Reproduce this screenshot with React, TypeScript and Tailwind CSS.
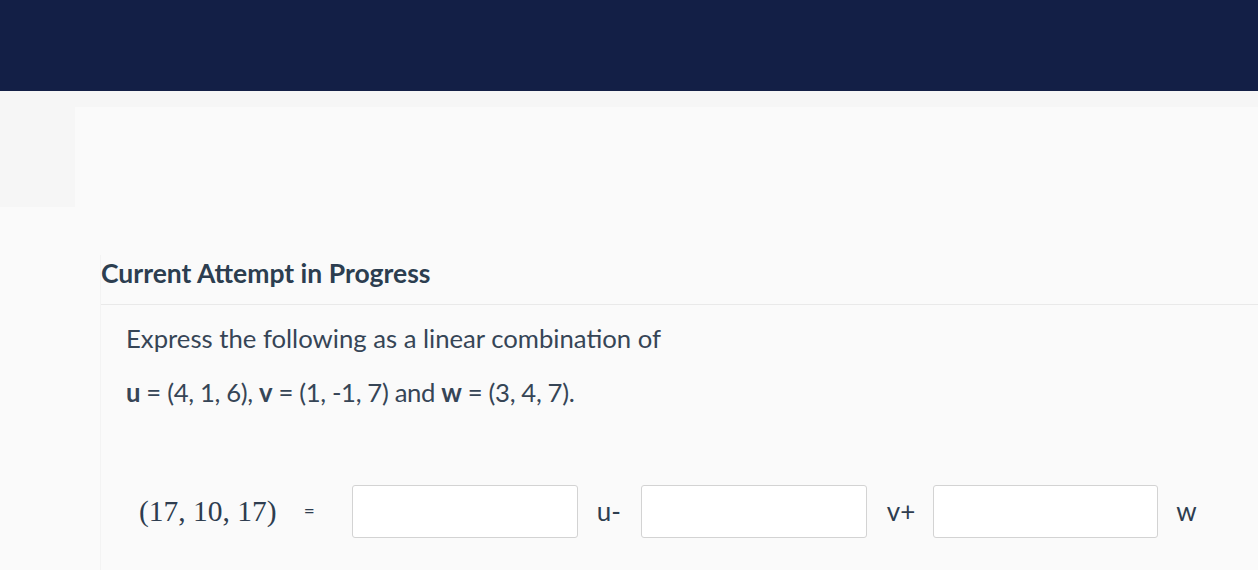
export default function App() {
  return (
    <div className="min-h-[570px] w-[1258px] bg-[#fafafa] font-['Lato','Noto_Sans',sans-serif] text-[#2e3d4f]">
      {/* top bar */}
      <div className="h-[91px] bg-[#131f46]" />

      <div className="h-[16px] bg-[#f6f6f6]" />
      <div className="flex">
        <div className="h-[100px] w-[75px] bg-[#f6f6f6]" />
      </div>

      <div className="mt-[48px] ml-[100px] border-l border-[#f3f3f3] bg-[#fafafa]">
        <div className="border-b border-[#e9e9e9] pt-[2px] pb-[15px]">
          <h2 className="text-[26.5px] font-bold leading-[32px] text-[#2c3e50]">Current Attempt in Progress</h2>
        </div>

        <div className="pl-[25px] pt-[16px] text-[25.7px] leading-[34px] text-[#364556]">
          <p>Express the following as a linear combination of</p>
          <p className="mt-[20px] tracking-[-0.35px]">
            <b>u</b> = (4, 1, 6), <b>v</b> = (1, -1, 7) and <b>w</b> = (3, 4, 7).
          </p>
        </div>

        <div className="flex items-center pt-[76px] pb-[32px] text-[#2e3d4f]">
          <span className="ml-[38px] font-['Liberation_Serif',serif] text-[29.5px] leading-none">(17, 10, 17)</span>
          <span className="ml-[27px] text-[19px]">=</span>
          <input className="ml-[37px] h-[53px] w-[226px] rounded-[3px] border border-[#d3d3d3] bg-white outline-none" />
          <span className="ml-[19px] text-[26px]">u-</span>
          <input className="ml-[20px] h-[53px] w-[226px] rounded-[3px] border border-[#d3d3d3] bg-white outline-none" />
          <span className="ml-[20px] text-[26px]">v+</span>
          <input className="ml-[18px] h-[53px] w-[225px] rounded-[3px] border border-[#d3d3d3] bg-white outline-none" />
          <span className="ml-[18px] text-[26px]">w</span>
        </div>
      </div>
    </div>
  );
}
